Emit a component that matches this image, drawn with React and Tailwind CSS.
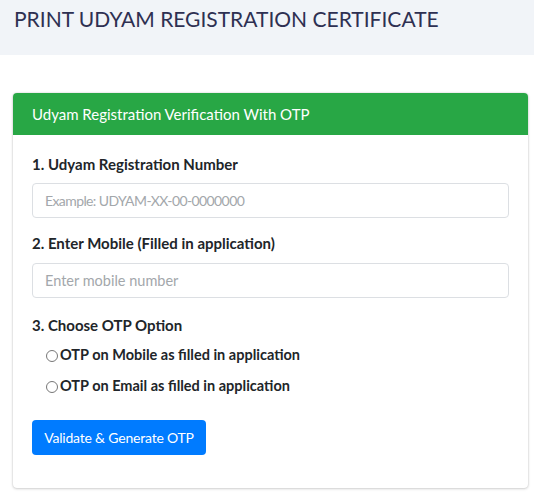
import React from "react";

export default function App() {
  const font = { fontFamily: "Lato, 'Liberation Sans', sans-serif" };
  return (
    <div className="w-[534px] h-[504px] bg-white overflow-hidden" style={font}>
      <div className="h-[55px] bg-[#f1f4f8] pl-[14px] pt-[5px]">
        <h1 className="text-[21px] leading-[28px] text-[#2e3052] font-normal">
          PRINT UDYAM REGISTRATION CERTIFICATE
        </h1>
      </div>
      <div className="pt-[38px] pl-[13px] pr-[6px]">
        <div className="rounded-[4px] bg-white shadow-[0_0_2px_rgba(0,0,0,0.18),0_1px_3px_rgba(0,0,0,0.15)]">
          <div className="h-[42px] bg-[#28a745] rounded-t-[4px] px-[19px] flex items-center">
            <span className="text-white text-[15px] leading-[20px]">
              Udyam Registration Verification With OTP
            </span>
          </div>
          <div className="px-[19px] pt-[18px] pb-[33px]">
            <div className="h-[22px] leading-[22px] text-[15px] font-bold text-[#212529]">
              1. Udyam Registration Number
            </div>
            <input
              className="mt-[8px] block w-full h-[35px] border border-[#dcdfe3] rounded-[4px] px-[12px] text-[14px] tracking-[-0.6px] placeholder:text-[#a3a7ab] outline-none"
              placeholder="Example: UDYAM-XX-00-0000000"
              style={font}
            />
            <div className="mt-[14px] h-[22px] leading-[22px] text-[15px] font-bold text-[#212529]">
              2. Enter Mobile (Filled in application)
            </div>
            <input
              className="mt-[9px] block w-full h-[35px] border border-[#dcdfe3] rounded-[4px] px-[12px] text-[14.5px] placeholder:text-[#a3a7ab] outline-none"
              placeholder="Enter mobile number"
              style={font}
            />
            <div className="mt-[16px] h-[22px] leading-[22px] text-[15px] font-bold text-[#212529]">
              3. Choose OTP Option
            </div>
            <div className="mt-[8px] pl-[14px] flex flex-col gap-[9px]">
              <label className="flex items-center h-[22px] text-[14.5px] font-bold text-[#212529]">
                <span className="w-[12px] h-[12px] rounded-full border border-[#777] mr-[2px] mt-[1px]"></span>
                OTP on Mobile as filled in application
              </label>
              <label className="flex items-center h-[22px] text-[14.5px] font-bold text-[#212529]">
                <span className="w-[12px] h-[12px] rounded-full border border-[#777] mr-[2px] mt-[1px]"></span>
                OTP on Email as filled in application
              </label>
            </div>
            <button
              className="mt-[23px] h-[35px] w-[174px] bg-[#007bff] text-white text-[14px] tracking-[-0.2px] rounded-[4px] flex items-center justify-center"
              style={font}
            >
              Validate &amp; Generate OTP
            </button>
          </div>
        </div>
      </div>
    </div>
  );
}
